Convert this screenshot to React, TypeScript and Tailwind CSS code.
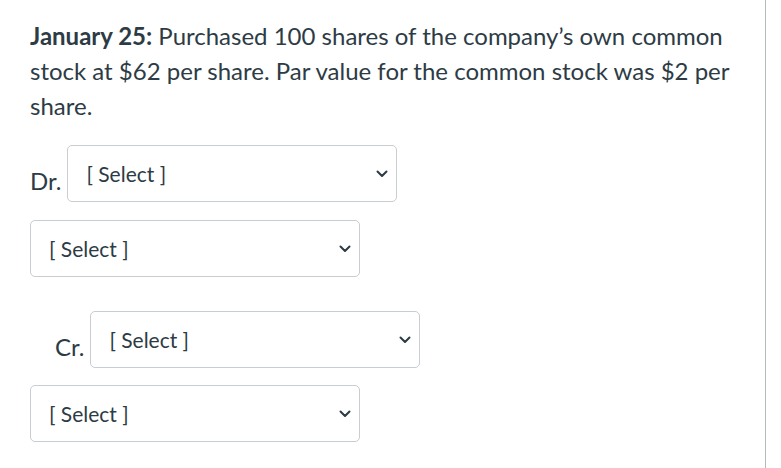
import React from "react";

const Chevron = () => (
  <svg width="12" height="8" viewBox="0 0 12 8" fill="none" className="shrink-0">
    <path d="M1.5 1.5 6 6l4.5-4.5" stroke="#2d3b45" strokeWidth={2} strokeLinecap="round" strokeLinejoin="round" />
  </svg>
);

const SelectBox = () => (
  <div className="w-[330px] h-[57px] border border-[#c7cdd1] rounded-[5px] bg-white flex items-center justify-between pl-[18px] pr-[8px] shrink-0">
    <span className="text-[21px] leading-none text-[#2d3b45]">[ Select ]</span>
    <Chevron />
  </div>
);

const App = () => {
  return (
    <div className="w-[781px] h-[468px] bg-white flex font-['Lato',sans-serif] text-[#2d3b45]">
      <div className="w-[765px] h-full pl-[30px] pr-[30px] pt-[18px] flex flex-col">
        <p className="text-[24px] leading-[35px]">
          <strong className="font-bold">January 25:</strong> Purchased 100 shares of the company’s own common stock at $62 per share. Par value for the common stock was $2 per share.
        </p>

        <div className="flex items-end gap-[6px] mt-[22px]">
          <span className="text-[24px] leading-[35px] mb-[4px]">Dr.</span>
          <SelectBox />
        </div>

        <div className="mt-[18px]">
          <SelectBox />
        </div>

        <div className="flex items-end gap-[6px] mt-[34px] pl-[25px]">
          <span className="text-[24px] leading-[35px] mb-[4px]">Cr.</span>
          <SelectBox />
        </div>

        <div className="mt-[17px]">
          <SelectBox />
        </div>
      </div>
      <div className="w-px h-full bg-[#b4b9bd]" />
    </div>
  );
};

export default App;
